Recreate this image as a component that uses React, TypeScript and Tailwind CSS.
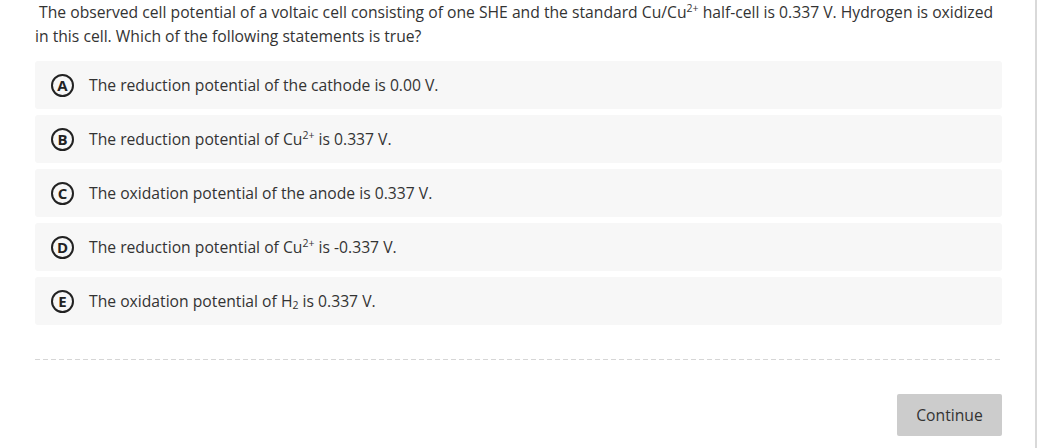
import React from "react";

const Sup = ({ children }: { children: React.ReactNode }) => (
  <sup className="text-[10.5px] -top-[0.55em]">{children}</sup>
);

const options: { letter: string; content: React.ReactNode }[] = [
  { letter: "A", content: <>The reduction potential of the cathode is 0.00 V.</> },
  { letter: "B", content: <>The reduction potential of Cu<Sup>2+</Sup> is 0.337 V.</> },
  { letter: "C", content: <>The oxidation potential of the anode is 0.337 V.</> },
  { letter: "D", content: <>The reduction potential of Cu<Sup>2+</Sup> is -0.337 V.</> },
  { letter: "E", content: <>The oxidation potential of H<sub className="text-[10.5px]">2</sub> is 0.337 V.</> },
];

export default function App() {
  return (
    <div className="w-[1040px] h-[448px] bg-white flex" style={{ fontFamily: '"Open Sans", sans-serif' }}>
      <div className="w-[1035px] pl-[35px] pr-[33px] flex flex-col">
        <p className="text-[15.7px] leading-[24px] text-[#333]">
          &nbsp;The observed cell potential of a voltaic cell consisting of one SHE and the standard Cu/Cu<Sup>2+</Sup> half-cell is 0.337 V. Hydrogen is oxidized in this cell. Which of the following statements is true?
        </p>
        <div className="mt-[13px] flex flex-col gap-[6px]">
          {options.map((o) => (
            <div key={o.letter} className="h-[48px] bg-[#f7f7f7] rounded-[3px] flex items-center pl-[16px] pt-[1px]">
              <div className="w-[23px] h-[23px] shrink-0 rounded-full border-2 border-solid border-[#222] flex items-center justify-center text-[15px] font-bold text-[#222] leading-none">
                {o.letter}
              </div>
              <div className="ml-[15px] text-[15.7px] text-[#333]">{o.content}</div>
            </div>
          ))}
        </div>
        <div className="mt-[34px] h-[1px] bg-[repeating-linear-gradient(to_right,#d6d6d6_0px,#d6d6d6_5px,transparent_5px,transparent_8px)]" />
        <div className="flex justify-end mt-[34px]">
          <button className="w-[105px] h-[42px] bg-[#cccccc] rounded-[2px] text-[15.7px] text-[#333] pt-[1px]">Continue</button>
        </div>
      </div>
      <div className="w-[2px] h-full bg-[#d9d9d9]" />
    </div>
  );
}
